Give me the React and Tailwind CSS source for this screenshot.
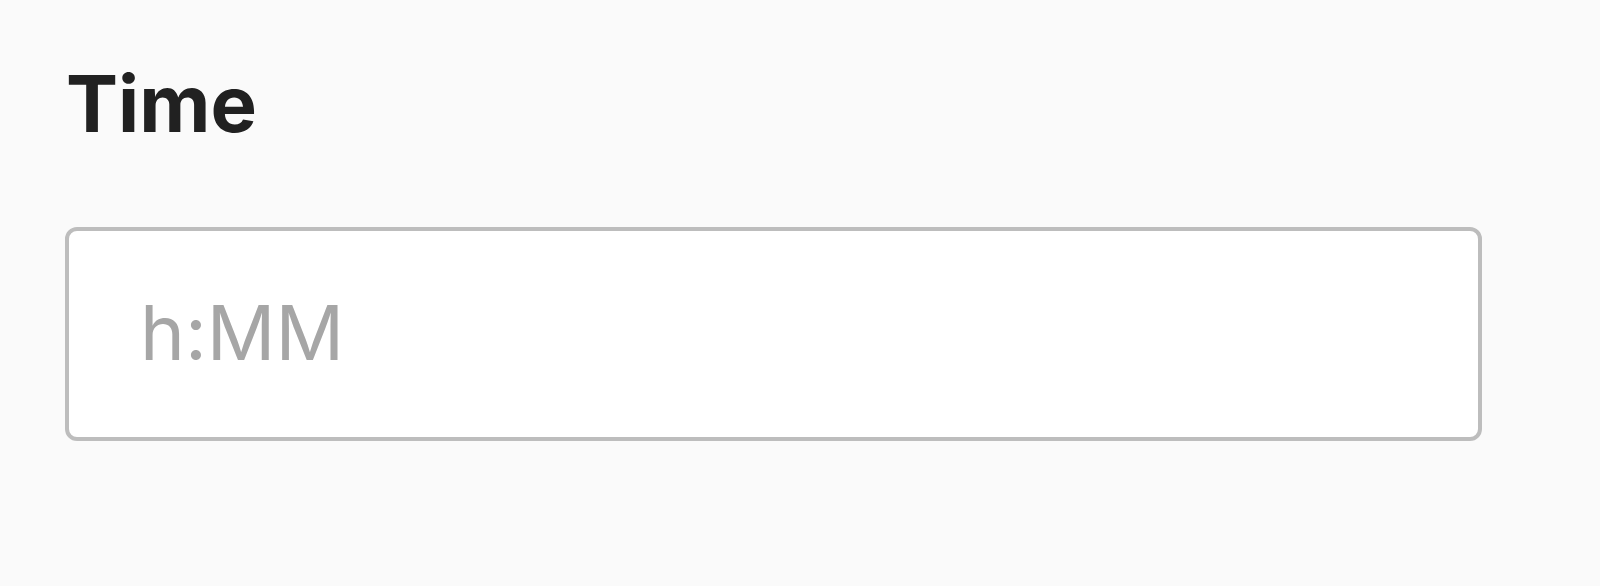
export default function App() {
  return (
    <div
      className="w-[1600px] h-[586px] bg-[#fafafa] pl-[65px] pt-[56px]"
      style={{ fontFamily: "Inter, 'Noto Sans', sans-serif" }}
    >
      <div className="text-[78px] leading-[95px] font-bold text-[#212121] pl-[1px]">Time</div>
      <div className="mt-[76px]">
        <input
          type="text"
          placeholder="h:MM"
          className="w-[1417px] h-[214px] bg-white border-[4px] border-[#bdbdbd] rounded-[12px] pl-[71px] pb-[4px] text-[76px] text-[#212121] placeholder:text-[#a6a6a6] outline-none"
          style={{ fontFamily: "Inter, 'Noto Sans', sans-serif" }}
        />
      </div>
    </div>
  );
}
